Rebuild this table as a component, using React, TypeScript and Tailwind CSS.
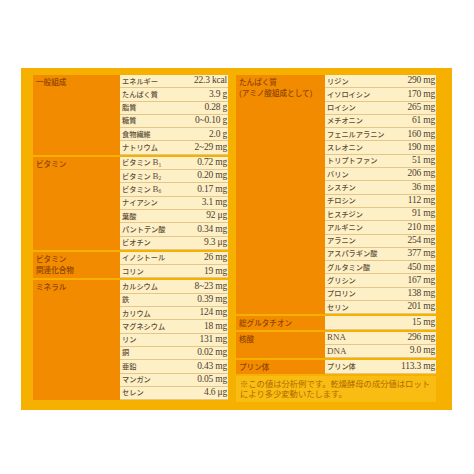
import React from 'react';

type Item = { name: React.ReactNode; value: string };
type Group = { label: React.ReactNode; items: Item[] };

const B = ({ n }: { n: string }) => (
  <span>
    ビタミン <span className="font-['Liberation_Serif',serif] text-[9px]">B</span>
    <sub className="font-['Liberation_Serif',serif] text-[5.5px]">{n}</sub>
  </span>
);

const leftGroups: Group[] = [
  {
    label: '一般組成',
    items: [
      { name: 'エネルギー', value: '22.3 kcal' },
      { name: 'たんぱく質', value: '3.9 g' },
      { name: '脂質', value: '0.28 g' },
      { name: '糖質', value: '0~0.10 g' },
      { name: '食物繊維', value: '2.0 g' },
      { name: 'ナトリウム', value: '2~29 mg' },
    ],
  },
  {
    label: 'ビタミン',
    items: [
      { name: <B n="1" />, value: '0.72 mg' },
      { name: <B n="2" />, value: '0.20 mg' },
      { name: <B n="6" />, value: '0.17 mg' },
      { name: 'ナイアシン', value: '3.1 mg' },
      { name: '葉酸', value: '92 μg' },
      { name: 'パントテン酸', value: '0.34 mg' },
      { name: 'ビオチン', value: '9.3 μg' },
    ],
  },
  {
    label: (
      <>
        ビタミン
        <br />
        関連化合物
      </>
    ),
    items: [
      { name: 'イノシトール', value: '26 mg' },
      { name: 'コリン', value: '19 mg' },
    ],
  },
  {
    label: 'ミネラル',
    items: [
      { name: 'カルシウム', value: '8~23 mg' },
      { name: '鉄', value: '0.39 mg' },
      { name: 'カリウム', value: '124 mg' },
      { name: 'マグネシウム', value: '18 mg' },
      { name: 'リン', value: '131 mg' },
      { name: '銅', value: '0.02 mg' },
      { name: '亜鉛', value: '0.43 mg' },
      { name: 'マンガン', value: '0.05 mg' },
      { name: 'セレン', value: '4.6 μg' },
    ],
  },
];

const rightGroups: Group[] = [
  {
    label: (
      <>
        たんぱく質
        <br />
        (アミノ酸組成として)
      </>
    ),
    items: [
      { name: 'リジン', value: '290 mg' },
      { name: 'イソロイシン', value: '170 mg' },
      { name: 'ロイシン', value: '265 mg' },
      { name: 'メチオニン', value: '61 mg' },
      { name: 'フェニルアラニン', value: '160 mg' },
      { name: 'スレオニン', value: '190 mg' },
      { name: 'トリプトファン', value: '51 mg' },
      { name: 'バリン', value: '206 mg' },
      { name: 'シスチン', value: '36 mg' },
      { name: 'チロシン', value: '112 mg' },
      { name: 'ヒスチジン', value: '91 mg' },
      { name: 'アルギニン', value: '210 mg' },
      { name: 'アラニン', value: '254 mg' },
      { name: 'アスパラギン酸', value: '377 mg' },
      { name: 'グルタミン酸', value: '450 mg' },
      { name: 'グリシン', value: '167 mg' },
      { name: 'プロリン', value: '138 mg' },
      { name: 'セリン', value: '201 mg' },
    ],
  },
  { label: '総グルタチオン', items: [{ name: '', value: '15 mg' }] },
  {
    label: '核酸',
    items: [
      { name: <span className="font-['Liberation_Serif',serif] text-[9px]">RNA</span>, value: '296 mg' },
      { name: <span className="font-['Liberation_Serif',serif] text-[9px]">DNA</span>, value: '9.0 mg' },
    ],
  },
  { label: 'プリン体', items: [{ name: 'プリン体', value: '113.3 mg' }] },
];

function GroupBlock({ group, catWidth }: { group: Group; catWidth: string }) {
  return (
    <div className="flex">
      <div className={`${catWidth} shrink-0 bg-[#f28b00] pl-[3px] pt-[1px] text-[7.6px] font-medium leading-[11px] text-[#8f4400]`}>
        {group.label}
      </div>
      <div className="flex flex-1 flex-col">
        {group.items.map((it, i) => (
          <div
            key={i}
            className="flex h-[13.3px] items-center justify-between border-b border-[#e6c688] bg-[#fdf0c6] pl-[2px] pr-[1px]"
          >
            <span className="text-[7.2px] font-medium leading-none text-[#5e4e36]">{it.name}</span>
            <span className="font-['Liberation_Serif',serif] text-[9.5px] leading-none tracking-[-0.2px] text-[#4f4130]">
              {it.value}
            </span>
          </div>
        ))}
      </div>
    </div>
  );
}

export default function App() {
  return (
    <div className="h-[474px] w-[474px] bg-white pl-[21px] pt-[68px] font-['Noto_Sans_CJK_JP',sans-serif]">
      <div className="flex h-[342px] w-[431px] gap-[8px] bg-[#f6b000] pl-[12px] pr-[16px] pt-[7px]">
        <div className="flex w-[195px] flex-col gap-[2px]">
          {leftGroups.map((g, i) => (
            <GroupBlock key={i} group={g} catWidth="w-[87px]" />
          ))}
        </div>
        <div className="flex w-[200px] flex-col gap-[2px]">
          {rightGroups.map((g, i) => (
            <GroupBlock key={i} group={g} catWidth="w-[89px]" />
          ))}
          <div className="bg-[#f8bc12] px-[4px] pt-[2px] pb-[3px] text-[8.3px] leading-[10.5px] text-[#b06a00]">
            ※この値は分析例です。乾燥酵母の成分値はロット
            <br />
            により多少変動いたします。
          </div>
        </div>
      </div>
    </div>
  );
}
